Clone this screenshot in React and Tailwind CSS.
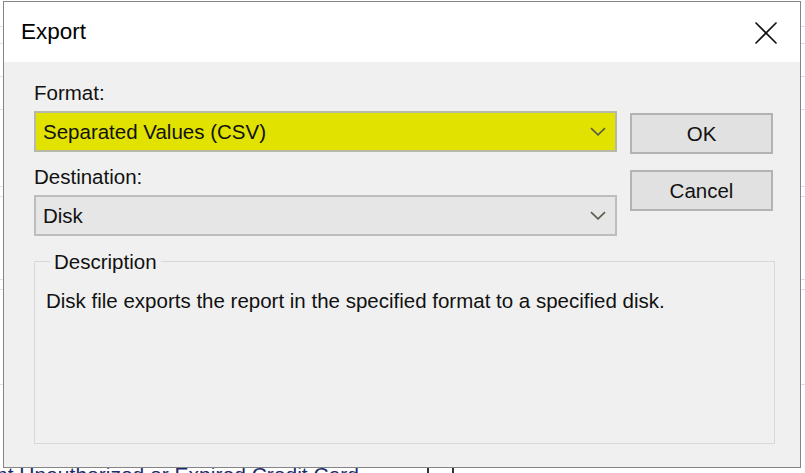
import { X } from 'lucide-react'

const font = { fontFamily: '"Liberation Sans", Arial, sans-serif' }

function Chevron() {
  return (
    <svg width="16" height="9" viewBox="0 0 16 9" className="shrink-0">
      <path d="M1 1.2 L8 7.8 L15 1.2" fill="none" stroke="#5a5a4a" strokeWidth="1.6" />
    </svg>
  )
}

function Combo({ value, yellow }) {
  return (
    <div
      className={`flex items-center justify-between h-[41px] border-2 pl-[7px] pr-[9px] text-[20.5px] leading-[23px] text-[#111] ${
        yellow ? 'bg-[#e2e200] border-[#b8b8a8]' : 'bg-[#e6e6e6] border-[#bdbdbd]'
      }`}
    >
      <span>{value}</span>
      <Chevron />
    </div>
  )
}

function Button({ children }) {
  return (
    <button className="h-[41px] w-[143px] bg-[#e1e1e1] border-2 border-[#b3b3b3] text-[20.5px] leading-[23px] text-[#111]">
      {children}
    </button>
  )
}

export default function App() {
  return (
    <div className="relative w-[805px] h-[473px] bg-white overflow-hidden" style={font}>
      {/* whatever is behind the dialog */}
      <div className="flex flex-col">
        {[27, 17, 33, 33, 77, 10, 83, 10, 95].map((h, i) => (
          <div key={i} className="border-b border-[#d6e2f0]" style={{ height: h }} />
        ))}
      </div>
      <div className="absolute left-0 top-[463px] flex items-start">
        <span className="ml-[-4px] w-[431px] text-[21px] leading-[23px] text-[#1d2a6b] whitespace-nowrap">
          nt Unauthorized or Expired Credit Card
        </span>
        <span className="h-[12px] border-l-2 border-[#333] w-[25px]" />
        <span className="h-[12px] border-l-2 border-[#333]" />
      </div>

      {/* dialog */}
      <div className="absolute left-[3px] top-[1px] w-[798px] h-[467px] border border-[#858585] flex flex-col">
        <div className="h-[60px] bg-white flex items-start justify-between pl-[17px] pr-[14px]">
          <span className="pt-[17px] text-[22.5px] leading-[25px] text-black">Export</span>
          <X className="mt-[11px]" size={40} strokeWidth={1} color="#111" />
        </div>
        <div className="flex-1 bg-[#f0f0f0] pl-[30px] pt-[19px]">
          <div className="flex gap-[13px]">
            <div className="w-[583px] flex flex-col">
              <div className="text-[20.5px] leading-[23px] text-[#111]">Format:</div>
              <div className="mt-[7px]">
                <Combo value="Separated Values (CSV)" yellow />
              </div>
              <div className="mt-[13px] text-[20.5px] leading-[23px] text-[#111]">Destination:</div>
              <div className="mt-[7px]">
                <Combo value="Disk" />
              </div>
            </div>
            <div className="flex flex-col gap-[16px] pt-[32px]">
              <Button>OK</Button>
              <Button>Cancel</Button>
            </div>
          </div>
          <fieldset className="mt-[14px] w-[741px] border border-[#d9d9d9]">
            <legend className="ml-[15px] px-[4px] text-[20.5px] leading-[23px] text-[#111]">Description</legend>
            <div className="h-[170px] pl-[11px] pt-[16px] text-[20.5px] leading-[23px] text-[#111]">
              Disk file exports the report in the specified format to a specified disk.
            </div>
          </fieldset>
        </div>
      </div>
    </div>
  )
}
